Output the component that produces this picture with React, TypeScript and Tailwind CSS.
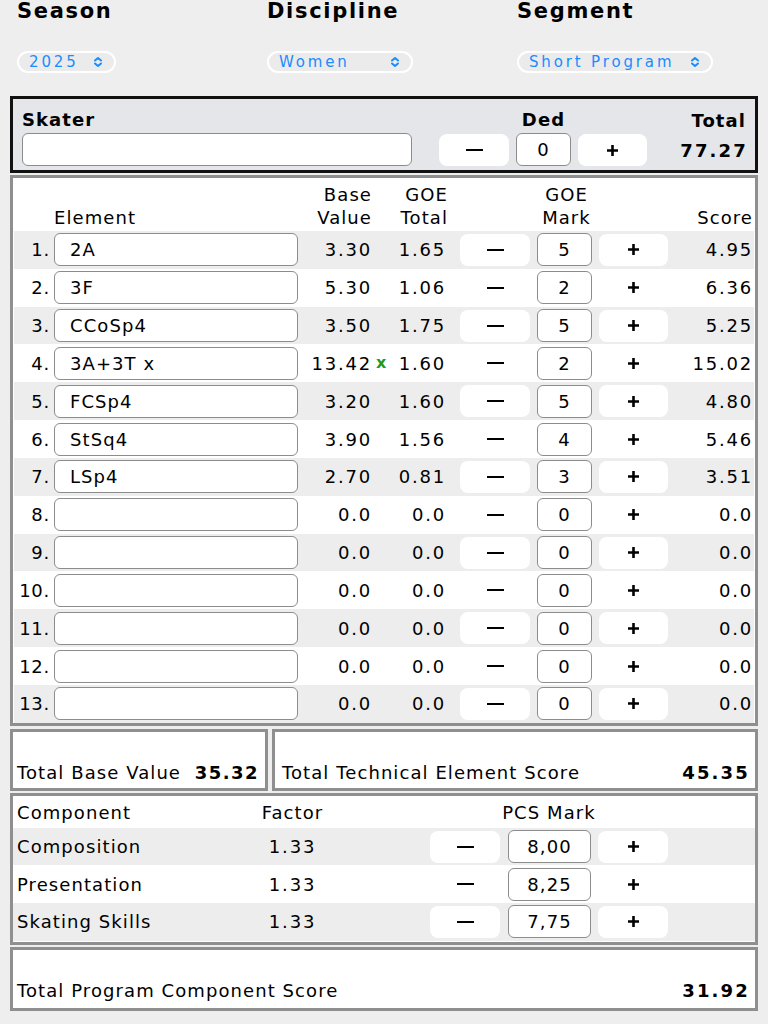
import React from 'react';

const font = { fontFamily: '"DejaVu Sans", Verdana, sans-serif' };

const elements = [
  { el: '2A', base: '3.30', goe: '1.65', mark: '5', score: '4.95' },
  { el: '3F', base: '5.30', goe: '1.06', mark: '2', score: '6.36' },
  { el: 'CCoSp4', base: '3.50', goe: '1.75', mark: '5', score: '5.25' },
  { el: '3A+3T x', base: '13.42', goe: '1.60', mark: '2', score: '15.02', bonus: true },
  { el: 'FCSp4', base: '3.20', goe: '1.60', mark: '5', score: '4.80' },
  { el: 'StSq4', base: '3.90', goe: '1.56', mark: '4', score: '5.46' },
  { el: 'LSp4', base: '2.70', goe: '0.81', mark: '3', score: '3.51' },
  ...Array.from({ length: 6 }, () => ({ el: '', base: '0.0', goe: '0.0', mark: '0', score: '0.0' })),
];

const components = [
  { name: 'Composition', factor: '1.33', mark: '8,00' },
  { name: 'Presentation', factor: '1.33', mark: '8,25' },
  { name: 'Skating Skills', factor: '1.33', mark: '7,75' },
];

function UpDown() {
  return (
    <svg width="12" height="12" viewBox="0 0 12 12" fill="none" stroke="#1a8cff" strokeWidth="2" strokeLinecap="round" strokeLinejoin="round">
      <path d="M3 4.5 L6 2 L9 4.5" />
      <path d="M3 7.5 L6 10 L9 7.5" />
    </svg>
  );
}

function Picker({ label, width }: { label: string; width: string }) {
  return (
    <div className={`${width} h-[22px] mt-[29px] flex items-center justify-between pl-[10px] pr-[10px] rounded-full border-2 border-white bg-[#ebebeb]`}>
      <span className="text-[15px] leading-none tracking-[0.19em] text-[#1a8cff]">{label}</span>
      <UpDown />
    </div>
  );
}

function Minus({ className = '' }: { className?: string }) {
  return (
    <button className={`h-[32px] bg-white rounded-lg flex items-center justify-center ${className}`}>
      <span className="block w-[17px] h-[2px] bg-black" />
    </button>
  );
}

function Plus({ className = '' }: { className?: string }) {
  return (
    <button className={`h-[32px] bg-white rounded-lg flex items-center justify-center ${className}`}>
      <svg width="13" height="13" viewBox="0 0 13 13">
        <path d="M6.5 1 V12 M1 6.5 H12" stroke="#000" strokeWidth="2.6" />
      </svg>
    </button>
  );
}

function Field({ value, className = '' }: { value: string; className?: string }) {
  return (
    <input
      readOnly
      value={value}
      className={`h-[33px] bg-white border border-[#8c8c8c] rounded-md outline-none text-[18px] tracking-[0.06em] text-black ${className}`}
    />
  );
}

export default function App() {
  return (
    <div className="w-[768px] min-h-[1024px] bg-[#eeeeee] text-black pb-[14px]" style={font}>
      {/* selectors */}
      <div className="pl-[17px] grid grid-cols-[250px_250px_250px]">
        {[
          { title: 'Season', label: '2025', w: 'w-[99px]' },
          { title: 'Discipline', label: 'Women', w: 'w-[146px]' },
          { title: 'Segment', label: 'Short Program', w: 'w-[196px]' },
        ].map((c) => (
          <div key={c.title}>
            <div className="text-[21px] leading-[22px] font-bold tracking-[0.08em]">{c.title}</div>
            <Picker label={c.label} width={c.w} />
          </div>
        ))}
      </div>

      {/* skater */}
      <div className="mx-[10px] mt-[23px] border-[3px] border-[#111111] bg-[#e4e6ea] pl-[9px] pr-[9px] pt-[11px] pb-[4px] flex items-end">
        <div className="w-[390px]">
          <div className="text-[18px] leading-[20px] font-bold tracking-[0.06em] mb-[3px]">Skater</div>
          <Field value="" className="w-[390px] h-[32px]" />
        </div>
        <Minus className="ml-[27px] w-[70px]" />
        <div className="ml-[7px] w-[55px] flex flex-col items-center">
          <div className="text-[18px] leading-[20px] font-bold tracking-[0.06em] mb-[3px]">Ded</div>
          <Field value="0" className="w-[55px] h-[32px] text-center" />
        </div>
        <Plus className="ml-[7px] w-[69px]" />
        <div className="flex-1 text-right">
          <div className="text-[18px] leading-[20px] font-bold tracking-[0.06em] mb-[3px]">Total</div>
          <div className="h-[32px] flex items-center justify-end text-[18px] font-bold tracking-[0.12em] -mr-[2px]">77.27</div>
        </div>
      </div>

      {/* elements */}
      <div className="mx-[10px] mt-[2px] border-[3px] border-[#8f8f8f] bg-white px-[1px] text-[18px] tracking-[0.06em]">
        <div className="flex pt-[5px] pb-[2px] leading-[23px]">
          <div className="w-[40px]" />
          <div className="w-[244px] flex items-end">Element</div>
          <div className="w-[74px] text-right">Base<br />Value</div>
          <div className="w-[28px]" />
          <div className="w-[48px] text-right">GOE<br />Total</div>
          <div className="ml-[14px] w-[70px]" />
          <div className="ml-[7px] w-[55px] text-center">GOE<br />Mark</div>
          <div className="ml-[7px] w-[69px]" />
          <div className="flex-1 text-right pr-[1px] flex items-end justify-end">Score</div>
        </div>
        {elements.map((r, i) => (
          <div key={i} className={`h-[37.83px] flex items-center ${i % 2 === 0 ? 'bg-[#ededed]' : 'bg-white'}`}>
            <div className="w-[38px] text-right pr-[2px] tracking-[0.04em]">{i + 1}.</div>
            <Field value={r.el} className="ml-[2px] w-[244px] pl-[15px]" />
            <div className="w-[74px] text-right tracking-[0.1em] -mr-[2px]">{r.base}</div>
            <div className="w-[28px] pl-[6px] text-[16px] font-bold text-[#1f9a1f] tracking-normal">{r.bonus ? 'x' : ''}</div>
            <div className="w-[48px] text-right tracking-[0.1em]">{r.goe}</div>
            <Minus className="ml-[14px] w-[70px]" />
            <Field value={r.mark} className="ml-[7px] w-[55px] text-center" />
            <Plus className="ml-[7px] w-[69px]" />
            <div className="flex-1 text-right pr-[1px] tracking-[0.1em]">{r.score}</div>
          </div>
        ))}
      </div>

      {/* totals */}
      <div className="mx-[10px] mt-[3px] flex gap-[4px] text-[18px] tracking-[0.06em] leading-[22px]">
        <div className="w-[258px] h-[62px] border-[3px] border-[#8f8f8f] bg-white flex items-end justify-between pl-[4px] pr-[6px] pb-[4px]">
          <span>Total Base Value</span>
          <span className="font-bold tracking-[0.08em]">35.32</span>
        </div>
        <div className="flex-1 h-[62px] border-[3px] border-[#8f8f8f] bg-white flex items-end justify-between pl-[7px] pr-[5px] pb-[4px]">
          <span>Total Technical Element Score</span>
          <span className="font-bold tracking-[0.12em]">45.35</span>
        </div>
      </div>

      {/* components */}
      <div className="mx-[10px] mt-[2px] border-[3px] border-[#8f8f8f] bg-white text-[18px] tracking-[0.06em] pb-[1px]">
        <div className="h-[32px] pt-[6px] flex leading-[22px]">
          <div className="w-[244px] pl-[4px]">Component</div>
          <div className="w-[71px] text-center">Factor</div>
          <div className="ml-[102px] w-[238px] text-center">PCS Mark</div>
        </div>
        {components.map((c, i) => (
          <div key={c.name} className={`h-[37.7px] flex items-center ${i % 2 === 0 ? 'bg-[#ededed]' : 'bg-white'}`}>
            <div className="w-[244px] pl-[4px]">{c.name}</div>
            <div className="w-[71px] text-center tracking-[0.1em]">{c.factor}</div>
            <Minus className="ml-[102px] w-[70px]" />
            <Field value={c.mark} className="ml-[8px] w-[83px] text-center" />
            <Plus className="ml-[7px] w-[70px]" />
          </div>
        ))}
      </div>

      <div className="mx-[10px] mt-[2px] h-[64px] border-[3px] border-[#8f8f8f] bg-white flex items-end justify-between pl-[4px] pr-[5px] pb-[6px] text-[18px] leading-[22px] tracking-[0.06em]">
        <span>Total Program Component Score</span>
        <span className="font-bold tracking-[0.12em]">31.92</span>
      </div>
    </div>
  );
}
